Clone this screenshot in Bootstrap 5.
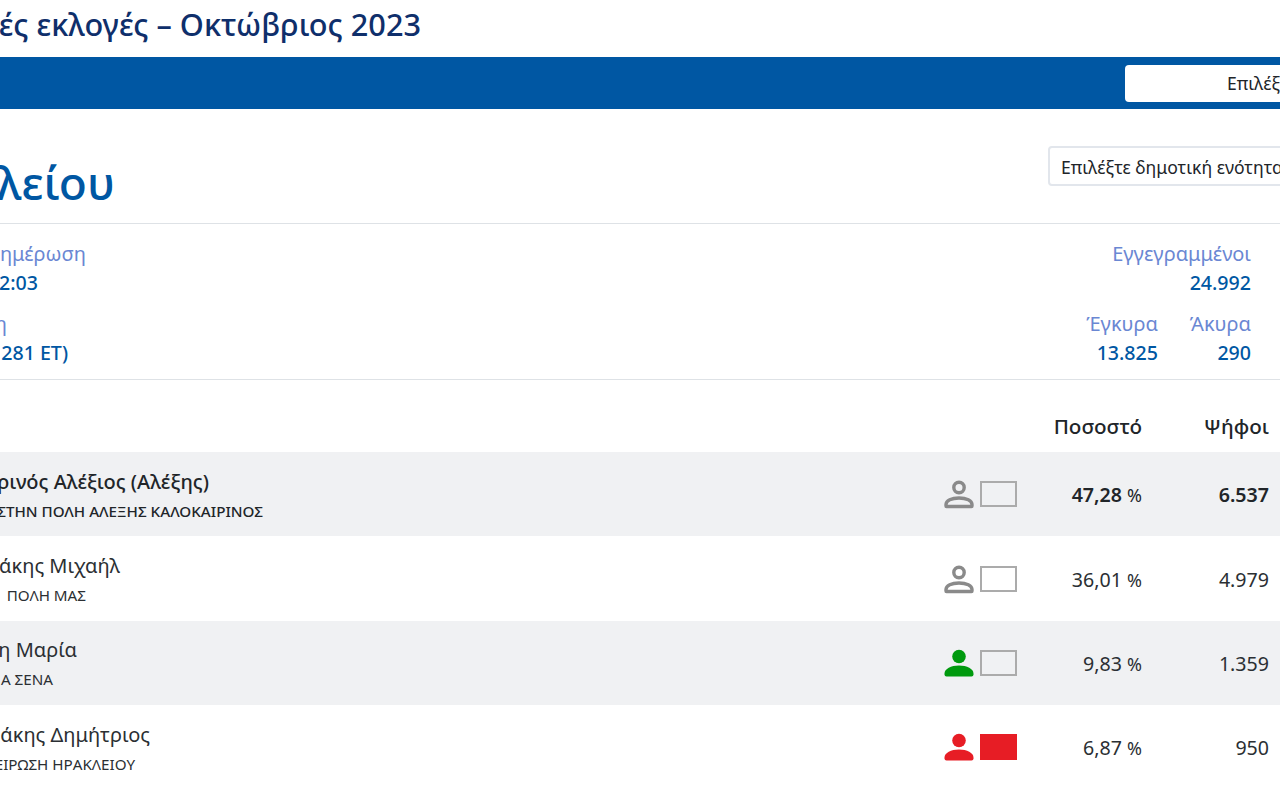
<!DOCTYPE html>
<html lang="el">
<head>
<meta charset="utf-8">
<title>Δημοτικές εκλογές</title>
<link href="https://cdn.jsdelivr.net/npm/bootstrap@5.3.0/dist/css/bootstrap.min.css" rel="stylesheet">
<style>
html,body{height:800px;overflow:hidden;background:#fff}
body{font-family:"Noto Sans","Open Sans",sans-serif;color:#212529}
.shell{width:1280px;height:800px;overflow:hidden}
.end-line{display:flex;justify-content:flex-end;white-space:nowrap}
.top-head{height:57px;padding-top:5px}
.top-title{font-size:30.7px;font-weight:500;color:#0f2f6b;line-height:38px;margin:0}
.band{height:52px;background:#0057a3;padding:8px 0 7px 1125px}
.band-btn{width:165px;height:37px;background:#fff;border-radius:4px;padding-left:102px;font-size:17.6px;line-height:37px;white-space:nowrap;overflow:hidden}
.head-zone{height:115px;border-bottom:1px solid #dee2e6;padding-top:37px}
.page-h{font-size:46px;font-weight:500;color:#0057a3;line-height:54px;margin:9px 0 0}
.sel-box{width:250px;height:40px;margin-right:-18px;border:2px solid #e2e6ec;border-radius:4px;padding-left:11px;font-size:17.6px;line-height:38px;white-space:nowrap;overflow:hidden;flex:none}
.info-zone{height:156px;border-bottom:1px solid #dee2e6;padding:15px 29px 0 0}
.info-lab{font-size:20px;line-height:29px;color:#6a87d3}
.info-val{font-size:19.6px;line-height:29px;font-weight:500;color:#0057a3}
.info-gap{margin-top:12px}
.col-akyra{width:93px}
.thead-row{height:72px;padding:31px 11px 0 0;font-size:20.6px;font-weight:500;color:#212529}
.pct-col{width:125px;flex:none;text-align:right}
.vot-col{width:127px;flex:none;text-align:right}
.elect-row{height:84.4px;padding-right:11px}
.elect-row:nth-child(odd){background:#f0f1f3}
.nm{font-size:20px;line-height:28px;color:#2b2f33}
.sub{font-size:15.2px;line-height:20px;margin-top:5px;color:#2b2f33}
.lead-row .nm{font-weight:500;color:#212529}
.lead-row .sub{font-weight:500;color:#212529}
.lead-row .pct-col,.lead-row .vot-col{font-weight:600}
.num{font-size:19.6px;line-height:30px;margin-top:2px;color:#2b2f33}
.lead-row .num{color:#212529}
.pct-sign{font-size:18px;font-weight:400}
.ppl{width:30px;height:30px;flex:none;margin-right:6px;display:block}
.flg{width:37px;height:26px;flex:none;border:2px solid #ababab;display:block}
.flg-on{background:#e71d25;border-color:#e71d25}
.tail{flex:none;display:flex;align-items:center}
.e209{width:209px}.e263{width:263px}.e120{width:120px}.e86{width:86px}.e77{width:77px}.e53{width:53px}.e150{width:150px}.e135{width:135px}
.e420{width:421px}.e115{width:115px}.e86b{width:86px}.e38{width:38px}.e7{width:7px}.e68{width:68px}
</style>
</head>
<body>
<div class="shell">
  <div class="top-head">
    <div class="end-line e420"><h1 class="top-title">ές εκλογές – Οκτώβριος 2023</h1></div>
  </div>
  <div class="band"><div class="band-btn">Επιλέξτε</div></div>
  <div class="head-zone d-flex justify-content-between">
    <div class="end-line e115"><h2 class="page-h">λείου</h2></div>
    <div class="sel-box">Επιλέξτε δημοτική ενότητα</div>
  </div>
  <div class="info-zone d-flex justify-content-between">
    <div>
      <div class="end-line e86b info-lab">ημέρωση</div>
      <div class="end-line e38 info-val">2:03</div>
      <div class="end-line e7 info-lab info-gap">η</div>
      <div class="end-line e68 info-val">281 ΕΤ)</div>
    </div>
    <div class="text-end">
      <div class="info-lab">Εγγεγραμμένοι</div>
      <div class="info-val">24.992</div>
      <div class="d-flex justify-content-end info-gap">
        <div><div class="info-lab">Έγκυρα</div><div class="info-val">13.825</div></div>
        <div class="col-akyra"><div class="info-lab">Άκυρα</div><div class="info-val">290</div></div>
      </div>
    </div>
  </div>
  <div class="thead-row d-flex justify-content-end">
    <div class="pct-col">Ποσοστό</div>
    <div class="vot-col">Ψήφοι</div>
  </div>
  <div>
    <div class="elect-row lead-row d-flex align-items-center justify-content-between">
      <div>
        <div class="end-line e209 nm">ρινός Αλέξιος (Αλέξης)</div>
        <div class="end-line e263 sub">ΣΤΗΝ ΠΟΛΗ ΑΛΕΞΗΣ ΚΑΛΟΚΑΙΡΙΝΟΣ</div>
      </div>
      <div class="d-flex align-items-center">
        <div class="tail">
          <svg class="ppl" viewBox="0 0 30 30"><circle cx="15" cy="8.500" r="5.200" fill="none" stroke="#8a8a8a" stroke-width="3.400"/><path d="M2 27v-1.500c0-4 5.500-6.500 13-6.500s13 2.500 13 6.500V27q0 .5-.5.5h-25Q2 27.500 2 27z" fill="none" stroke="#8a8a8a" stroke-width="3.400"/></svg>
          <span class="flg"></span>
        </div>
        <div class="pct-col num">47,28 <span class="pct-sign">%</span></div>
        <div class="vot-col num">6.537</div>
      </div>
    </div>
    <div class="elect-row d-flex align-items-center justify-content-between">
      <div>
        <div class="end-line e120 nm">άκης Μιχαήλ</div>
        <div class="end-line e86 sub">ΠΟΛΗ ΜΑΣ</div>
      </div>
      <div class="d-flex align-items-center">
        <div class="tail">
          <svg class="ppl" viewBox="0 0 30 30"><circle cx="15" cy="8.500" r="5.200" fill="none" stroke="#8a8a8a" stroke-width="3.400"/><path d="M2 27v-1.500c0-4 5.500-6.500 13-6.500s13 2.500 13 6.500V27q0 .5-.5.5h-25Q2 27.500 2 27z" fill="none" stroke="#8a8a8a" stroke-width="3.400"/></svg>
          <span class="flg"></span>
        </div>
        <div class="pct-col num">36,01 <span class="pct-sign">%</span></div>
        <div class="vot-col num">4.979</div>
      </div>
    </div>
    <div class="elect-row d-flex align-items-center justify-content-between">
      <div>
        <div class="end-line e77 nm">η Μαρία</div>
        <div class="end-line e53 sub">Α ΣΕΝΑ</div>
      </div>
      <div class="d-flex align-items-center">
        <div class="tail">
          <svg class="ppl" viewBox="0 0 30 30"><circle cx="15" cy="8.500" r="6.800" fill="#009a0e"/><path d="M.5 26.500v-1C.5 21 7 17.500 15 17.500s14.500 3.500 14.500 8v1q0 2-2 2h-25q-2 0-2-2z" fill="#009a0e"/></svg>
          <span class="flg"></span>
        </div>
        <div class="pct-col num">9,83 <span class="pct-sign">%</span></div>
        <div class="vot-col num">1.359</div>
      </div>
    </div>
    <div class="elect-row d-flex align-items-center justify-content-between">
      <div>
        <div class="end-line e150 nm">άκης Δημήτριος</div>
        <div class="end-line e135 sub">ΕΙΡΩΣΗ ΗΡΑΚΛΕΙΟΥ</div>
      </div>
      <div class="d-flex align-items-center">
        <div class="tail">
          <svg class="ppl" viewBox="0 0 30 30"><circle cx="15" cy="8.500" r="6.800" fill="#e71d25"/><path d="M.5 26.500v-1C.5 21 7 17.500 15 17.500s14.500 3.500 14.500 8v1q0 2-2 2h-25q-2 0-2-2z" fill="#e71d25"/></svg>
          <span class="flg flg-on"></span>
        </div>
        <div class="pct-col num">6,87 <span class="pct-sign">%</span></div>
        <div class="vot-col num">950</div>
      </div>
    </div>
  </div>
</div>
<script src="https://cdn.jsdelivr.net/npm/bootstrap@5.3.0/dist/js/bootstrap.bundle.min.js"></script>
</body>
</html>
